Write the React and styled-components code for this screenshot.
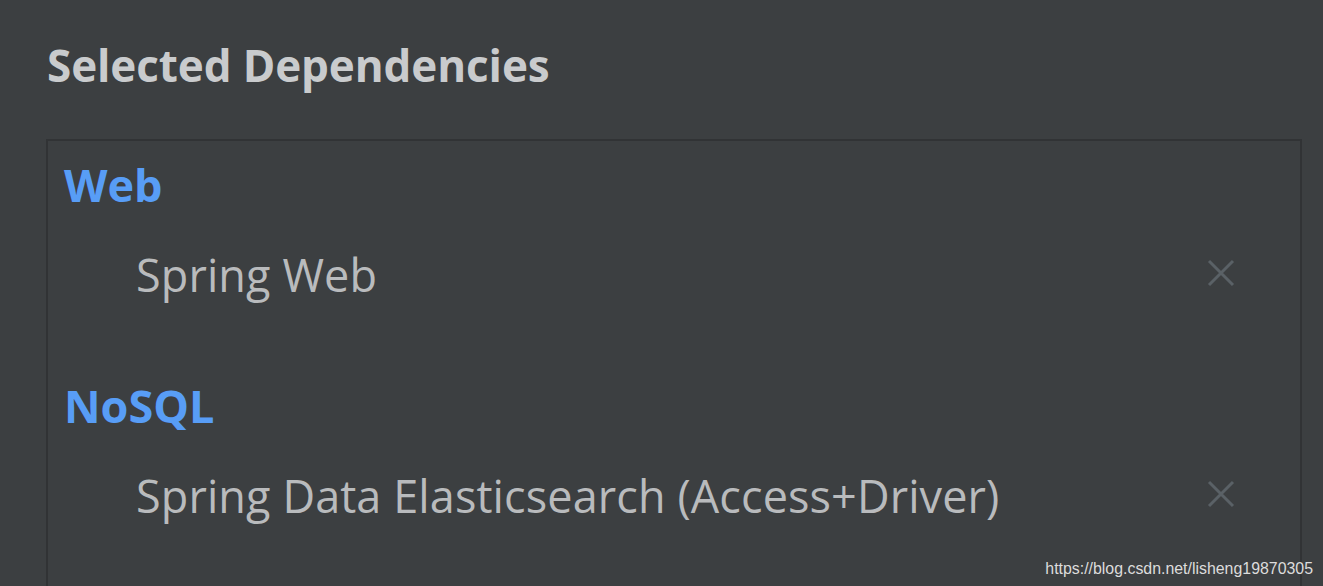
import React from "react";
import styled, { createGlobalStyle } from "styled-components";

const Global = createGlobalStyle`
  html, body { margin: 0; padding: 0; background: #3c3f41; }
  body { width: 1323px; height: 586px; overflow: hidden; }
`;

const Page = styled.div`
  position: relative;
  width: 1323px;
  height: 586px;
  box-sizing: border-box;
  padding: 37px 21px 0 46px;
  background: #3c3f41;
  font-family: "Open Sans", "Noto Sans", sans-serif;
  overflow: hidden;
`;

const Title = styled.div`
  font-size: 44px;
  font-weight: 700;
  color: #c9cbcd;
  line-height: 56px;
  padding-left: 1px;
  letter-spacing: -0.1px;
`;

const Panel = styled.div`
  margin-top: 46px;
  height: 600px;
  border: 2px solid #313335;
  border-bottom: none;
  box-sizing: border-box;
  padding: 16px 0 0 16px;
`;

const Group = styled.div`
  display: flex;
  flex-direction: column;
`;

const Category = styled.div`
  font-size: 45px;
  font-weight: 700;
  color: #589df6;
  line-height: 56px;
  height: 56px;
`;

const Item = styled.div`
  display: flex;
  align-items: flex-start;
  justify-content: space-between;
  height: 165px;
  padding: 32px 65px 0 72px;
  box-sizing: border-box;
`;

const ItemName = styled.span`
  font-size: 45px;
  color: #b9bbbd;
  line-height: 60px;
  letter-spacing: 0.1px;
`;

const Remove = styled.svg`
  width: 28px;
  height: 28px;
  margin-top: 14px;
  flex: none;
`;

const Watermark = styled.div`
  position: absolute;
  right: 10px;
  bottom: 8px;
  font-family: "Liberation Sans", Arial, sans-serif;
  font-size: 15.9px;
  color: #dcdcdc;
`;

const CloseIcon = () => (
  <Remove viewBox="0 0 28 28">
    <path d="M2 2 L26 26 M26 2 L2 26" stroke="#5a6166" strokeWidth="3" fill="none" />
  </Remove>
);

const groups = [
  { name: "Web", items: ["Spring Web"] },
  { name: "NoSQL", items: ["Spring Data Elasticsearch (Access+Driver)"] },
];

export default function App() {
  return (
    <>
      <Global />
      <Page>
        <Title>Selected Dependencies</Title>
        <Panel>
          {groups.map((g) => (
            <Group key={g.name}>
              <Category>{g.name}</Category>
              {g.items.map((it) => (
                <Item key={it}>
                  <ItemName>{it}</ItemName>
                  <CloseIcon />
                </Item>
              ))}
            </Group>
          ))}
        </Panel>
        <Watermark>https://blog.csdn.net/lisheng19870305</Watermark>
      </Page>
    </>
  );
}
